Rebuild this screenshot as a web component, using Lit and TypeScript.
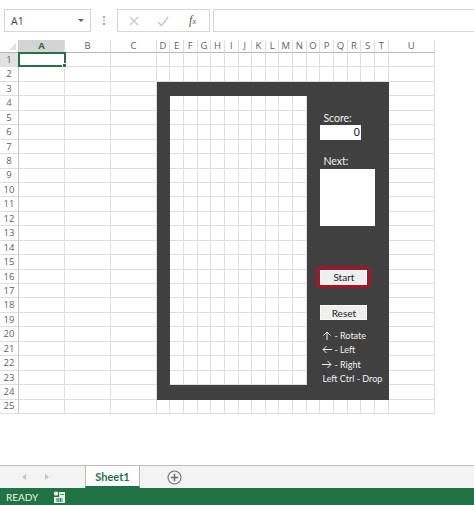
import { LitElement, html, css, svg } from "lit";
import { customElement } from "lit/decorators.js";
import { styleMap } from "lit/directives/style-map.js";

const COLS = ["A","B","C","D","E","F","G","H","I","J","K","L","M","N","O","P","Q","R","S","T","U"];
const ROWS = Array.from({ length: 25 }, (_, i) => i + 1);

@customElement("app-root")
export class AppRoot extends LitElement {
  static styles = css`
    :host { display: flex; flex-direction: column; width: 474px; height: 505px; background: #fff; overflow: hidden; font-family: "Open Sans", "Liberation Sans", sans-serif; }
    .toolbar { display: flex; align-items: flex-start; height: 40px; flex: none; padding: 9px 0 0 4px; box-sizing: border-box; }
    .namebox { width: 87px; height: 23px; box-sizing: border-box; border: 1px solid #d6d6d6; display: flex; align-items: center; justify-content: space-between; padding: 0 6px 0 6px; font-size: 10.5px; color: #444; }
    .caret { width: 0; height: 0; border-left: 3px solid transparent; border-right: 3px solid transparent; border-top: 3px solid #666; }
    .dots { width: 26px; height: 23px; display: flex; flex-direction: column; align-items: center; justify-content: center; gap: 2px; }
    .dots i { width: 1.5px; height: 1.5px; background: #a8a8a8; display: block; }
    .fxgroup { width: 93px; height: 23px; box-sizing: border-box; border: 1px solid #d6d6d6; display: flex; align-items: center; justify-content: space-around; padding: 0 1px; }
    .fxgroup svg { width: 12px; height: 12px; display: block; }
    .fx { font-family: "Liberation Serif", serif; font-style: italic; font-size: 12px; color: #555; width: 14px; text-align: center; }
    .fx sub { font-size: 8px; vertical-align: baseline; }
    .formula { flex: 1; height: 23px; box-sizing: border-box; margin-left: 3px; border: 1px solid #d6d6d6; border-right: none; }

    .sheetarea { flex: 1; min-height: 0; }
    .sheet { display: grid; width: max-content;
      grid-template-columns: 19px 46.2px 46px 45.5px repeat(17, 13.65px) 46.3px;
      grid-template-rows: 13px repeat(25, 14.44px); }
    .cell { box-sizing: border-box; border-right: 1px solid #dedede; border-bottom: 1px solid #dedede; }
    .dark { background: #404040; border-color: #404040; }
    .corner { grid-column: 1; grid-row: 1; border-right: 1px solid #c6c6c6; border-bottom: 1px solid #b8b8b8; position: relative; overflow: hidden; }
    .corner::after { content: ""; position: absolute; right: 2px; bottom: 2px; border-style: solid; border-width: 0 0 7px 7px; border-color: transparent transparent #dfdfdf transparent; }
    .colhead { box-sizing: border-box; font-size: 9.5px; color: #5f5f5f; display: flex; align-items: center; justify-content: center; border-right: 1px solid #dedede; border-bottom: 1px solid #b8b8b8; line-height: 1; }
    .rowhead { box-sizing: border-box; font-size: 9.5px; color: #5f5f5f; display: flex; align-items: center; justify-content: center; border-right: 1px solid #c6c6c6; border-bottom: 1px solid #dedede; line-height: 1; }
    .sel { background: #d4d4d4; color: #217346; font-weight: 700; }
    .rowsel { background: #e1e1e1; }
    .selection { grid-column: 2 / 3; grid-row: 2 / 3; border: 2px solid #217346; box-sizing: border-box; position: relative; margin: -1px -1px 0 -1px; }
    .selection::after { content: ""; position: absolute; right: -3px; bottom: -3px; width: 5px; height: 5px; background: #217346; border: 1px solid #fff; box-sizing: border-box; }

    .label { font-family: Lato, "Liberation Sans", sans-serif; font-size: 9px; color: #f0f0f0; white-space: nowrap; display: flex; align-items: center; padding-left: 2px; gap: 2px; grid-column: 17 / 23; }
    .score-label { grid-row: 6 / 7; padding-left: 3px; font-size: 10.5px; }
    .next-label { grid-row: 9 / 10; padding-left: 3px; font-size: 10.5px; }
    .help1 { grid-row: 21 / 22; margin-top: 2px; }
    .help2 { grid-row: 22 / 23; margin-top: 2px; }
    .help3 { grid-row: 23 / 24; margin-top: 2px; }
    .help4 { grid-row: 24 / 25; margin-top: 1px; }
    .label svg { width: 10px; height: 9px; display: block; flex: none; }
    .score { grid-column: 17 / 20; grid-row: 7 / 8; background: #fff; color: #222; font-family: Lato, sans-serif; font-size: 10.5px; font-weight: 500; text-align: right; padding-right: 1.5px; line-height: 14px; }
    .next { grid-column: 17 / 21; grid-row: 10 / 14; background: #fff; }
    .btn { grid-column: 17 / 21; width: 47px; height: 15px; box-sizing: border-box; background: #efefef; color: #222; font-family: Lato, sans-serif; font-size: 10px; display: flex; align-items: center; justify-content: center; border: 1px solid #fafafa; }
    .start { grid-row: 17 / 18; position: relative; }
    .start::after { content: ""; position: absolute; inset: -5px -5px -4.5px -5px; border: 3px solid #ad1220; border-radius: 5px; }
    .reset { grid-row: 19 / 21; margin-top: 7px; }

    .tabs { height: 23px; flex: none; box-sizing: border-box; background: #f3f3f3; border-top: 1px solid #bcbcbc; display: flex; align-items: stretch; position: relative; }
    .nav { width: 85px; display: flex; align-items: center; gap: 19px; padding-left: 22px; box-sizing: border-box; }
    .nav i { display: block; width: 0; height: 0; border-top: 3px solid transparent; border-bottom: 3px solid transparent; }
    .nav .l { border-right: 4px solid #c4c4c4; }
    .nav .r { border-left: 4px solid #c4c4c4; }
    .tab { width: 55px; margin-top: -1px; background: #fff; box-sizing: border-box; border: 1px solid #bcbcbc; border-bottom: 2px solid #217346; display: flex; align-items: center; justify-content: center; font-family: Lato, sans-serif; font-size: 11px; font-weight: 700; color: #217346; }
    .plus { display: flex; align-items: center; padding-left: 27px; }
    .plus svg { width: 15px; height: 15px; display: block; }

    .status { height: 17px; flex: none; background: #217346; color: #e8f2ec; display: flex; align-items: center; padding-left: 6px; font-family: Lato, sans-serif; font-size: 10px; gap: 15px; }
    .status svg { width: 12px; height: 12px; display: block; }
  `;

  private isDark(r: number, c: number) {
    const inPanel = r >= 3 && r <= 24 && c >= 3 && c <= 19;
    const inBoard = r >= 4 && r <= 23 && c >= 4 && c <= 13;
    return inPanel && !inBoard;
  }

  private at(row: number, col: number) {
    return styleMap({ gridRow: String(row), gridColumn: String(col) });
  }

  private arrow(d: string) {
    return html`<svg viewBox="0 0 10 9" fill="none" stroke="#f0f0f0" stroke-width="1">${svg`<path d=${d}/>`}</svg>`;
  }

  render() {
    return html`
      <div class="toolbar">
        <div class="namebox"><span>A1</span><span class="caret"></span></div>
        <div class="dots"><i></i><i></i><i></i></div>
        <div class="fxgroup">
          <svg viewBox="0 0 12 12" fill="none" stroke="#c8c8c8" stroke-width="1.4"><path d="M2 2l8 8M10 2l-8 8"/></svg>
          <svg viewBox="0 0 12 12" fill="none" stroke="#c8c8c8" stroke-width="1.5"><path d="M1 7l3.5 3.5L11 2"/></svg>
          <span class="fx">f<sub>x</sub></span>
        </div>
        <div class="formula"></div>
      </div>
      <div class="sheetarea">
        <div class="sheet">
          <div class="corner"></div>
          ${COLS.map((c, i) => html`<div class="colhead ${i === 0 ? "sel" : ""}" style=${this.at(1, i + 2)}>${c}</div>`)}
          ${ROWS.map((r) => html`
            <div class="rowhead ${r === 1 ? "rowsel" : ""}" style=${this.at(r + 1, 1)}>${r}</div>
            ${COLS.map((_, c) => html`<div class="cell ${this.isDark(r, c) ? "dark" : ""}" style=${this.at(r + 1, c + 2)}></div>`)}
          `)}
          <div class="selection"></div>
          <div class="label score-label">Score:</div>
          <div class="score">0</div>
          <div class="label next-label">Next:</div>
          <div class="next"></div>
          <div class="btn start">Start</div>
          <div class="btn reset">Reset</div>
          <div class="label help1">${this.arrow("M5 9V1M1.5 4.5L5 1l3.5 3.5")}<span>- Rotate</span></div>
          <div class="label help2">${this.arrow("M10 4.5H1M4.5 1L1 4.5 4.5 8")}<span>- Left</span></div>
          <div class="label help3">${this.arrow("M0 4.5h9M5.5 1L9 4.5 5.5 8")}<span>- Right</span></div>
          <div class="label help4">Left Ctrl - Drop</div>
        </div>
      </div>
      <div class="tabs">
        <div class="nav"><i class="l"></i><i class="r"></i></div>
        <div class="tab">Sheet1</div>
        <div class="plus">
          <svg viewBox="0 0 15 15" fill="none" stroke="#6e6e6e"><circle cx="7.5" cy="7.5" r="6.5" stroke-width="1.1"/><path d="M7.5 3.8v7.4M3.8 7.5h7.4" stroke-width="1.6"/></svg>
        </div>
      </div>
      <div class="status">
        <span>READY</span>
        <svg viewBox="0 0 12 12"><circle cx="3" cy="2.6" r="2.2" fill="#e8f2ec"/><path d="M6 1h6v11H1V6h5z" fill="#e8f2ec"/><path d="M3 8h7M3 10h7M5 7v4M7.5 7v4M7 3.5h4" stroke="#217346" stroke-width=".8" fill="none"/></svg>
      </div>
    `;
  }
}
